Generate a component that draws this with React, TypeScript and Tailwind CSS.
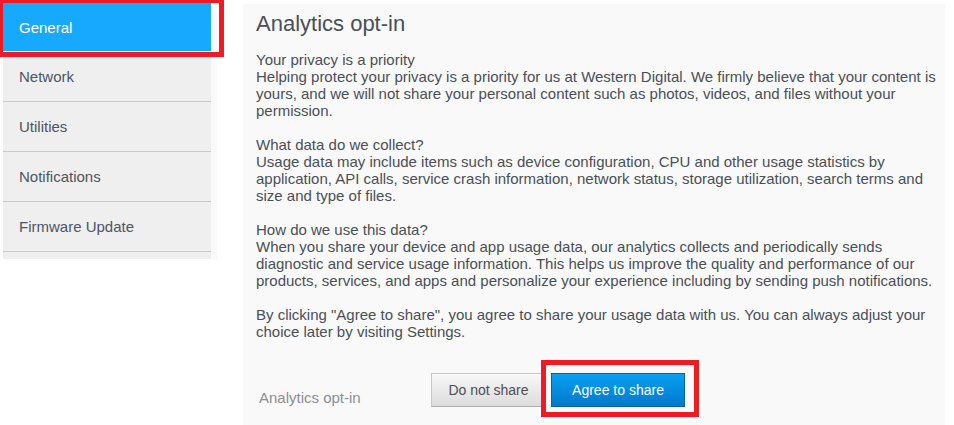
const navItems = ['General', 'Network', 'Utilities', 'Notifications', 'Firmware Update']

const paragraphs = [
  {
    head: 'Your privacy is a priority',
    body: 'Helping protect your privacy is a priority for us at Western Digital. We firmly believe that your content is yours, and we will not share your personal content such as photos, videos, and files without your permission.',
  },
  {
    head: 'What data do we collect?',
    body: 'Usage data may include items such as device configuration, CPU and other usage statistics by application, API calls, service crash information, network status, storage utilization, search terms and size and type of files.',
  },
  {
    head: 'How do we use this data?',
    body: 'When you share your device and app usage data, our analytics collects and periodically sends diagnostic and service usage information. This helps us improve the quality and performance of our products, services, and apps and personalize your experience including by sending push notifications.',
  },
  {
    head: null,
    body: 'By clicking "Agree to share", you agree to share your usage data with us. You can always adjust your choice later by visiting Settings.',
  },
]

function Sidebar() {
  return (
    <div className="mt-[3px] ml-[3px] w-[214px] shrink-0 self-start bg-[#f9f9f9]">
      <ul className="w-[208px] h-[256px] bg-[#efefef]">
        {navItems.map((item, i) => {
          const active = i === 0
          return (
            <li
              key={item}
              className={`relative flex items-center pl-[16px] pt-[2px] text-[15px] ${
                active
                  ? 'bg-[#17a9fe] text-white h-[48px] mb-[1px]'
                  : 'h-[50px] text-[#4b5563] border-b border-[#c9c9c9]'
              }`}
            >
              {item}
              {active && (
                <span className="absolute left-[-5px] top-[-5px] w-[226px] h-[59px] border-[5px] border-[#ed1c24]" />
              )}
            </li>
          )
        })}
      </ul>
    </div>
  )
}

export default function App() {
  return (
    <div className="flex min-h-[425px] bg-white font-['Liberation_Sans',Arial,sans-serif]">
      <Sidebar />
      <main className="ml-[26px] mt-[4px] w-[702px] min-h-[430px] bg-[#f9f9f9] pl-[13px] pr-[6px] pt-[7px] text-[#4a4f57]">
        <h1 className="text-[22px] leading-[26px]">Analytics opt-in</h1>
        <div className="mt-[14px] flex flex-col gap-[17px] text-[15px] leading-[17px]">
          {paragraphs.map((p, i) => (
            <p key={i}>
              {p.head && (
                <>
                  {p.head}
                  <br />
                </>
              )}
              {p.body}
            </p>
          ))}
        </div>
        <div className="mt-[33px] flex items-end">
          <span className="w-[172px] ml-[3px] pb-[1px] text-[15px] leading-[17px] text-[#8a8f96]">
            Analytics opt-in
          </span>
          <div className="flex gap-[5px]">
            <button className="w-[115px] h-[34px] text-[14px] text-[#4a4f57] bg-gradient-to-b from-[#f8f8f8] to-[#dcdcdc] border border-[#c8c8c8] border-b-[#aeaeae]">
              Do not share
            </button>
            <div className="relative">
              <button className="w-[134px] h-[34px] text-[14px] text-white bg-gradient-to-b from-[#0aa0f2] to-[#0079cc] border border-[#0064a6]">
                Agree to share
              </button>
              <span className="absolute left-[-10px] top-[-13px] w-[158px] h-[57px] border-[5px] border-[#ed1c24]" />
            </div>
          </div>
        </div>
      </main>
    </div>
  )
}
